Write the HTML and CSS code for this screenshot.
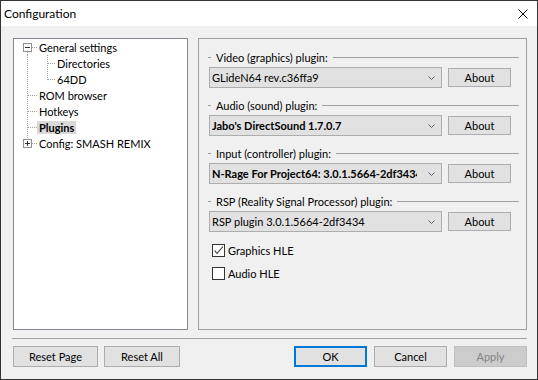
FILE: index.html
```html
<!DOCTYPE html>
<html>
<head>
	<meta charset="utf-8">
	<link rel="stylesheet" href="styles.css">
</head>
<body>
<div class="window">
	<div class="titlebar">
		<span class="title">Configuration</span>
		<svg class="close" width="10" height="10" viewBox="0 0 10 10"><path d="M0.5 0.5L9.5 9.5M9.5 0.5L0.5 9.5" stroke="#000" stroke-width="1" fill="none"/></svg>
	</div>
	<div class="client">
		<div class="main">
			<div class="tree">
				<div class="node">
					<svg class="cell" width="19" height="16"><g stroke="#a0a0a0" stroke-dasharray="1 1"><path d="M14 8.5H19M9.5 13V16"/></g><rect x="5.5" y="4.5" width="8" height="8" fill="#fff" stroke="#919191"/><path d="M7 8.5H12" stroke="#333"/></svg>
					<span class="label">General settings</span>
				</div>
				<div class="node">
					<svg class="cell" width="19" height="16"><path d="M9.5 0V16" stroke="#a0a0a0" stroke-dasharray="1 1"/></svg>
					<svg class="cell" width="18" height="16"><path d="M10.5 0V16M11 8.5H18" stroke="#a0a0a0" stroke-dasharray="1 1"/></svg>
					<span class="label">Directories</span>
				</div>
				<div class="node">
					<svg class="cell" width="19" height="16"><path d="M9.5 0V16" stroke="#a0a0a0" stroke-dasharray="1 1"/></svg>
					<svg class="cell" width="18" height="16"><path d="M10.5 0V9M11 8.5H18" stroke="#a0a0a0" stroke-dasharray="1 1"/></svg>
					<span class="label">64DD</span>
				</div>
				<div class="node">
					<svg class="cell" width="19" height="16"><path d="M9.5 0V16M10 8.5H19" stroke="#a0a0a0" stroke-dasharray="1 1"/></svg>
					<span class="label">ROM browser</span>
				</div>
				<div class="node">
					<svg class="cell" width="19" height="16"><path d="M9.5 0V16M10 8.5H19" stroke="#a0a0a0" stroke-dasharray="1 1"/></svg>
					<span class="label">Hotkeys</span>
				</div>
				<div class="node">
					<svg class="cell" width="19" height="16"><path d="M9.5 0V16M10 8.5H19" stroke="#a0a0a0" stroke-dasharray="1 1"/></svg>
					<span class="label selected">Plugins</span>
				</div>
				<div class="node">
					<svg class="cell" width="19" height="16"><g stroke="#a0a0a0" stroke-dasharray="1 1"><path d="M9.5 0V4M14 8.5H19"/></g><rect x="5.5" y="4.5" width="8" height="8" fill="#fff" stroke="#919191"/><path d="M7 8.5H12M9.5 6V11" stroke="#333"/></svg>
					<span class="label">Config: SMASH REMIX</span>
				</div>
			</div>
			<div class="panel">
				<div class="group">
					<div class="legend"><span class="dash"></span><span class="legend-text">Video (graphics) plugin:</span><span class="rule"></span></div>
					<div class="picker">
						<div class="combo"><span class="combo-text">GLideN64 rev.c36ffa9</span><svg class="chev" width="7" height="4"><path d="M0.5 0.5L3.5 3.5L6.5 0.5" stroke="#606060" fill="none"/></svg></div>
						<button class="btn about">About</button>
					</div>
				</div>
				<div class="group">
					<div class="legend"><span class="dash"></span><span class="legend-text">Audio (sound) plugin:</span><span class="rule"></span></div>
					<div class="picker">
						<div class="combo"><span class="combo-text bold">Jabo's DirectSound 1.7.0.7</span><svg class="chev" width="7" height="4"><path d="M0.5 0.5L3.5 3.5L6.5 0.5" stroke="#606060" fill="none"/></svg></div>
						<button class="btn about">About</button>
					</div>
				</div>
				<div class="group">
					<div class="legend"><span class="dash"></span><span class="legend-text">Input (controller) plugin:</span><span class="rule"></span></div>
					<div class="picker">
						<div class="combo"><span class="combo-text bold">N-Rage For Project64: 3.0.1.5664-2df3434</span><svg class="chev" width="7" height="4"><path d="M0.5 0.5L3.5 3.5L6.5 0.5" stroke="#606060" fill="none"/></svg></div>
						<button class="btn about">About</button>
					</div>
				</div>
				<div class="group">
					<div class="legend"><span class="dash"></span><span class="legend-text">RSP (Reality Signal Processor) plugin:</span><span class="rule"></span></div>
					<div class="picker">
						<div class="combo"><span class="combo-text">RSP plugin 3.0.1.5664-2df3434</span><svg class="chev" width="7" height="4"><path d="M0.5 0.5L3.5 3.5L6.5 0.5" stroke="#606060" fill="none"/></svg></div>
						<button class="btn about">About</button>
					</div>
				</div>
				<div class="checks">
					<div class="check"><span class="box"><svg width="11" height="11"><path d="M1.5 5.5L4 8.5L10 1.5" stroke="#333" stroke-width="1.1" fill="none"/></svg></span>Graphics HLE</div>
					<div class="check"><span class="box"></span>Audio HLE</div>
				</div>
			</div>
		</div>
		<div class="separator"></div>
		<div class="buttons">
			<button class="btn reset-page">Reset Page</button>
			<button class="btn reset-all">Reset All</button>
			<span class="spacer"></span>
			<button class="btn action default">OK</button>
			<button class="btn action">Cancel</button>
			<button class="btn action disabled">Apply</button>
		</div>
	</div>
</div>
</body>
</html>
```

FILE: styles.css
```css
body{
	margin: 0;
	font-family: Lato, "Noto Sans", sans-serif;
	font-size: 11px;
	color: #000;
}

.window {
	width: 538px;
	height: 380px;
	box-sizing: border-box;
	border: 1px solid #333;
	display: flex;
	flex-direction: column;
	background: #f0f0f0;
}

.titlebar {
	height: 25px;
	background: #fff;
	display: flex;
	align-items: center;
	padding: 0 9px 0 3px;
	flex: none;
}
.title {
	flex: 1;
	font-size: 12px;
}

.client {
	flex: 1;
	display: flex;
	flex-direction: column;
	padding: 12px 10px 0 12px;
}

.main {
	display: flex;
	gap: 10px;
	height: 292px;
}

/* tree view */
.tree {
	width: 175px;
	box-sizing: border-box;
	border: 1px solid #828790;
	background: #fff;
	padding-left: 4px;
}
.node {
	display: flex;
	align-items: center;
	height: 16px;
}
.cell {
	display: block;
	flex: none;
}
.label {
	height: 13px;
	line-height: 13px;
	padding: 0 2px;
	white-space: nowrap;
}
.selected {
	background: #d9d9d9;
	font-weight: bold;
}

/* plugin panel */
.panel {
	flex: 1;
	box-sizing: border-box;
	border: 1px solid #a0a0a0;
	padding: 11px 7px 0 9px;
}
.group {
	margin-bottom: 10px;
}
.legend {
	display: flex;
	align-items: center;
	height: 15px;
	margin-bottom: 2px;
}
.dash {
	width: 3px;
	height: 1px;
	background: #a0a0a0;
}
.legend-text {
	padding: 0 5px;
	white-space: nowrap;
}
.rule {
	flex: 1;
	height: 1px;
	background: #a0a0a0;
}
.picker {
	display: flex;
	align-items: center;
	gap: 6px;
	margin-left: 1px;
}
.combo {
	width: 233px;
	height: 21px;
	box-sizing: border-box;
	border: 1px solid #adadad;
	background: #e1e1e1;
	display: flex;
	align-items: center;
	padding: 0 6px 0 2px;
}
.combo-text {
	flex: 1;
	overflow: hidden;
	white-space: nowrap;
	margin-right: 11px;
}
.bold {
	font-weight: bold;
}
.chev {
	display: block;
	flex: none;
}

.btn {
	font-family: inherit;
	font-size: inherit;
	color: #000;
	height: 21px;
	box-sizing: border-box;
	border: 1px solid #adadad;
	background: #e1e1e1;
	padding: 0;
}
.about {
	width: 63px;
	height: 19px;
}

.checks {
	margin-top: 1px;
	margin-left: 4px;
	display: flex;
	flex-direction: column;
	gap: 7px;
}
.check {
	display: flex;
	align-items: center;
	height: 16px;
	gap: 3px;
}
.box {
	width: 13px;
	height: 13px;
	box-sizing: border-box;
	border: 1px solid #333;
	background: #fff;
	display: flex;
	align-items: center;
	justify-content: center;
}
.box svg {
	display: block;
}

/* bottom bar */
.separator {
	height: 1px;
	background: #a0a0a0;
	margin: 8px 0 0 -1px;
}
.buttons {
	display: flex;
	margin-top: 7px;
	gap: 7px;
}
.reset-page {
	width: 85px;
}
.reset-all {
	width: 76px;
	margin-left: -1px;
}
.spacer {
	flex: 1;
}
.action {
	width: 73px;
}
.default {
	border: 2px solid #0078d7;
}
.disabled {
	background: #cccccc;
	border-color: #bfbfbf;
	color: #838383;
}
```
